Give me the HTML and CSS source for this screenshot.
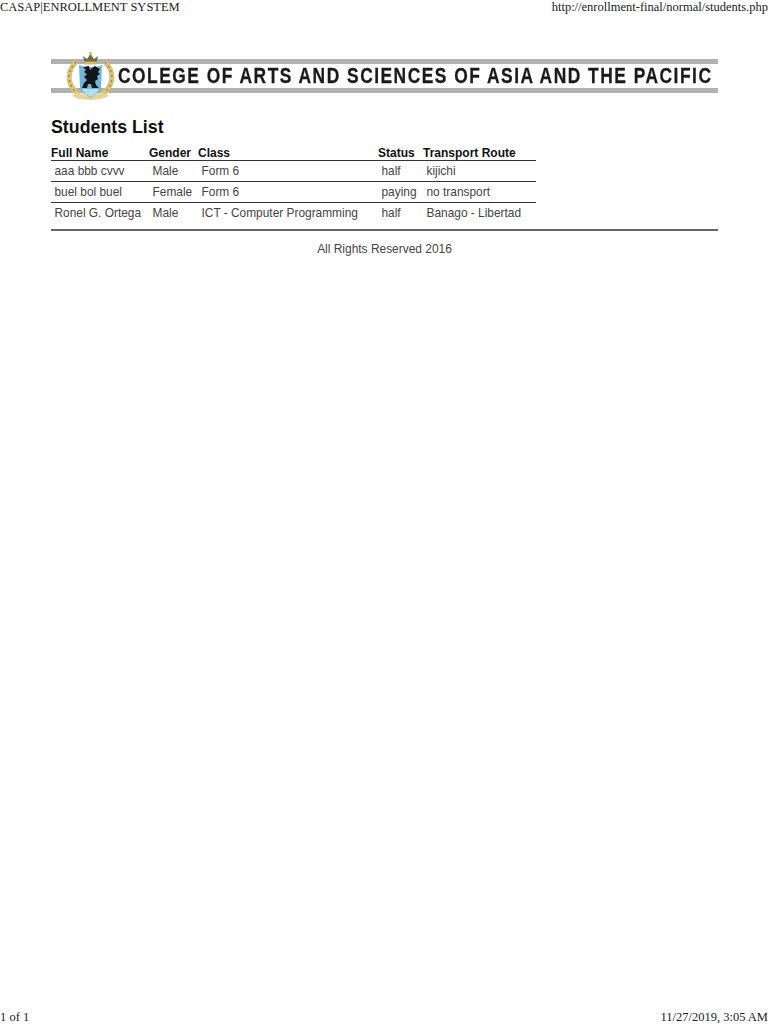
FILE: index.html
```html
<!DOCTYPE html>
<html lang="en">
<head>
<meta charset="utf-8">
<title>CASAP|ENROLLMENT SYSTEM</title>
<link rel="stylesheet" href="styles.css">
</head>
<body>
<header class="print-bar">
  <span>CASAP|ENROLLMENT SYSTEM</span>
  <span>http://enrollment-final/normal/students.php</span>
</header>
<main class="content">
  <div class="banner">
    <svg class="crest" viewBox="0 0 50 52" aria-hidden="true">
      <path d="M11 11C2 20 1 33 13 43" fill="none" stroke="#dcc274" stroke-width="5"/>
      <path d="M40 11C49 20 50 33 38 43" fill="none" stroke="#dcc274" stroke-width="5"/>
      <path d="M11 11C2 20 1 33 13 43" fill="none" stroke="#9d8a4a" stroke-width="1.5" stroke-dasharray="2 3"/>
      <path d="M40 11C49 20 50 33 38 43" fill="none" stroke="#9d8a4a" stroke-width="1.5" stroke-dasharray="2 3"/>
      <path d="M7 45L12 41L25 46L38 41L44 45L36 48L25 49L14 48Z" fill="#e6d592"/>
      <path d="M14 14L20 16H31L37 14L36 37C35 41 30 44 25.5 47C21 44 16 41 15 37Z" fill="#71b6d6"/>
      <path d="M17 38L34 38C32 42 29 44 25.5 46C22 44 19 42 17 38Z" fill="#b9dcea"/>
      <path d="M18 16L24 15L25 19L27 17L30 15L35 18L33 21L35 23L32 25L33 28L30 30L31 34L34 37H27L26 33L23 33L22 37H17L19 32L22 29L19 26L22 23L19 21L21 19Z" fill="#12161a"/>
      <path d="M20 13L18 5L22 8L25.5 3L29 8L33 5L31 13Z" fill="#6e6a4c"/>
      <rect x="19.500" y="10.500" width="12" height="3" fill="#d6bb62"/>
      <circle cx="25.500" cy="2.200" r="1.500" fill="#d6bb62"/>
    </svg>
    <span class="banner-title">COLEGE OF ARTS AND SCIENCES OF ASIA AND THE PACIFIC</span>
  </div>
  <h1 class="page-title">Students List</h1>
  <table class="students">
    <thead>
      <tr>
        <th class="col-name">Full Name</th>
        <th class="col-gender">Gender</th>
        <th class="col-class">Class</th>
        <th class="col-status">Status</th>
        <th class="col-route">Transport Route</th>
      </tr>
    </thead>
    <tbody>
      <tr><td>aaa bbb cvvv</td><td>Male</td><td>Form 6</td><td>half</td><td>kijichi</td></tr>
      <tr><td>buel bol buel</td><td>Female</td><td>Form 6</td><td>paying</td><td>no transport</td></tr>
      <tr><td>Ronel G. Ortega</td><td>Male</td><td>ICT - Computer Programming</td><td>half</td><td>Banago - Libertad</td></tr>
    </tbody>
  </table>
  <hr class="rule">
  <p class="rights">All Rights Reserved 2016</p>
</main>
<footer class="print-bar print-bottom">
  <span>1 of 1</span>
  <span>11/27/2019, 3:05 AM</span>
</footer>
</body>
</html>
```
FILE: styles.css
```css
* { box-sizing: border-box; }
html, body { margin: 0; height: 100%; }
body {
  display: flex;
  flex-direction: column;
  height: 1024px;
  background: #fff;
  color: #222;
  font-family: "Liberation Sans", Arial, sans-serif;
  overflow: hidden;
}
.print-bar {
  display: flex;
  justify-content: space-between;
  font-family: "Liberation Serif", "Times New Roman", serif;
  font-size: 12.5px;
  line-height: 14px;
  color: #222;
}
.print-bottom { margin-top: auto; }
.content {
  padding: 45px 50px 0 51px;
  display: flex;
  flex-direction: column;
}
.banner {
  position: relative;
  height: 34px;
  border-top: 5px solid #b1b1ad;
  border-bottom: 5px solid #b1b1ad;
  padding-left: 67px;
  display: flex;
  align-items: center;
  filter: blur(0.35px);
}
.crest {
  position: absolute;
  left: 14px;
  top: -13px;
  width: 50px;
  height: 52px;
}
.banner-title {
  font-family: "Liberation Sans", sans-serif;
  font-weight: 700;
  font-size: 22px;
  line-height: 24px;
  color: #1a1a1a;
  white-space: nowrap;
  letter-spacing: 1.9px;
  -webkit-text-stroke: 0.3px #1a1a1a;
  transform: scaleX(0.79);
  transform-origin: left center;
}
.page-title {
  margin: 24px 0 0;
  font-size: 17.8px;
  line-height: 21px;
  font-weight: 700;
  color: #111;
}
.students {
  margin-top: 8px;
  width: 485px;
  border-collapse: collapse;
  table-layout: fixed;
  font-size: 12px;
}
.students th {
  padding: 0;
  height: 14px;
  text-align: left;
  font-weight: 700;
  color: #111;
  border-bottom: 1.5px solid #333;
}
.col-name { width: 98px; }
.col-gender { width: 49px; }
.col-class { width: 180px; }
.col-status { width: 45px; }
.col-route { width: 113px; }
.students td {
  padding: 0 0 0 3.5px;
  height: 21px;
  font-size: 11.9px;
  color: #444;
  white-space: nowrap;
  border-bottom: 1px solid #333;
}
.students tbody tr:last-child td { border-bottom: 0; }
.rule {
  margin: 5px 0 0;
  border: 0;
  border-top: 2px solid #666;
  height: 0;
}
.rights {
  margin: 11px 0 0;
  text-align: center;
  font-size: 11.95px;
  line-height: 15px;
  color: #444;
}
```
